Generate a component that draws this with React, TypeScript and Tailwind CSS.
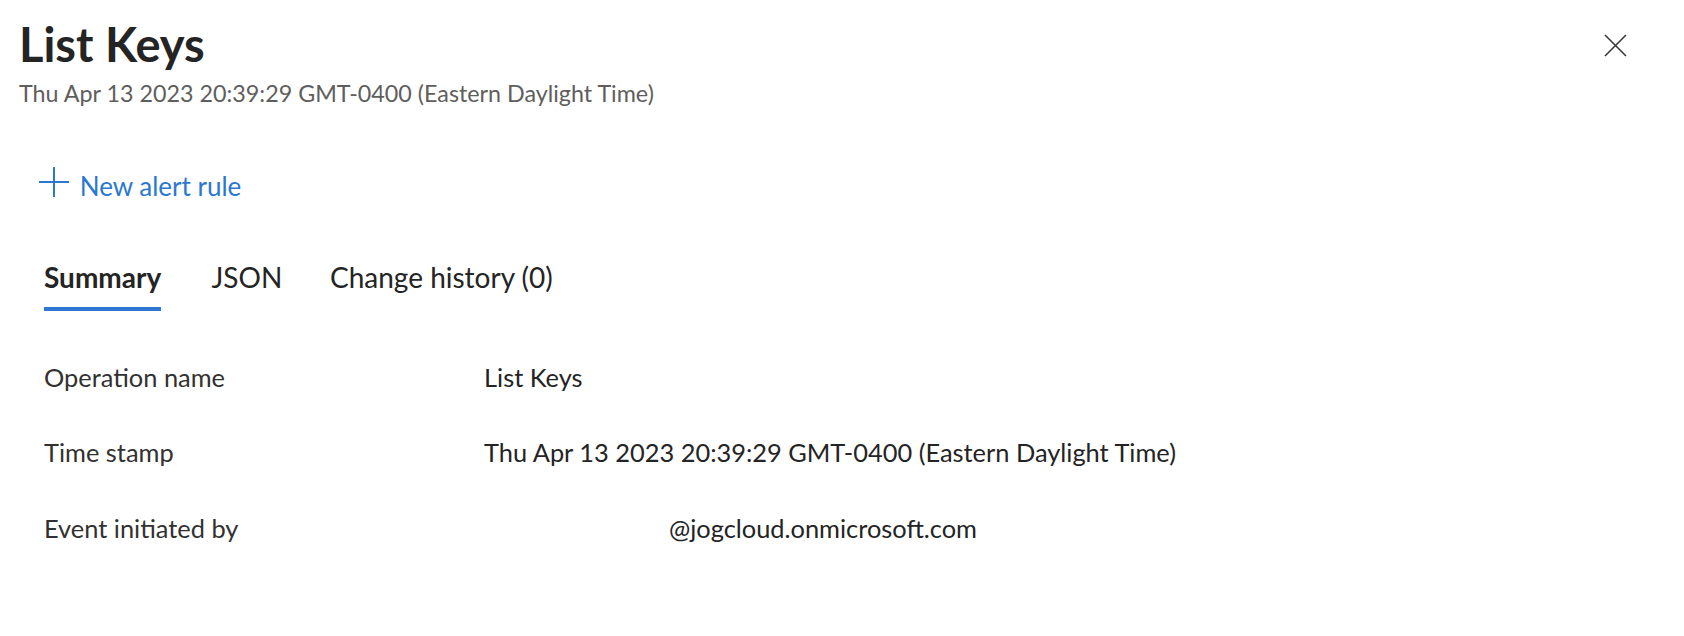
import React, { useState } from "react";

const rows: { label: string; value: string; indent?: boolean }[] = [
  { label: "Operation name", value: "List Keys" },
  { label: "Time stamp", value: "Thu Apr 13 2023 20:39:29 GMT-0400 (Eastern Daylight Time)" },
  { label: "Event initiated by", value: "@jogcloud.onmicrosoft.com", indent: true },
];

const tabs = [
  { name: "Summary", width: "w-[167.5px]" },
  { name: "JSON", width: "w-[118.5px]" },
  { name: "Change history (0)", width: "w-auto" },
];

const App: React.FC = () => {
  const [active, setActive] = useState("Summary");

  return (
    <div className="min-h-[636px] w-full bg-white font-[Lato,sans-serif] text-[#323130]">
      {/* Header */}
      <div className="flex justify-between pl-[19px] pr-[57px] pt-[18px]">
        <div>
          <h1 className="text-[47px] leading-[52px] font-bold text-[#242424]">List Keys</h1>
          <p className="mt-[8.5px] text-[23.3px] leading-[28px] text-[#605e5c]">
            Thu Apr 13 2023 20:39:29 GMT-0400 (Eastern Daylight Time)
          </p>
        </div>
        <button className="mt-[16px] h-[23px] w-[23px]" aria-label="Close">
          <svg viewBox="0 0 23 23" className="h-[23px] w-[23px]" fill="none" stroke="#3b3a39" strokeWidth="1.6">
            <path d="M1 1 L22 22 M22 1 L1 22" />
          </svg>
        </button>
      </div>

      {/* Command */}
      <div className="mt-[63px] flex items-start pl-[39px]">
        <svg viewBox="0 0 30 30" className="mt-[-2.2px] h-[30px] w-[30px]" fill="none" stroke="#2b78d0" strokeWidth="2">
          <path d="M15 0 V30 M0 15 H30" />
        </svg>
        <span className="ml-[10.7px] text-[26px] leading-[32px] text-[#2b78d0]">New alert rule</span>
      </div>

      {/* Tabs */}
      <div className="mt-[58px] flex pl-[44px]">
        {tabs.map((t) => (
          <div key={t.name} className={t.width}>
            <button
              onClick={() => setActive(t.name)}
              className={`inline-flex flex-col text-[28px] leading-[34px] text-[#242424] ${
                active === t.name ? "font-bold" : "font-normal"
              }`}
            >
              {t.name}
              <span className={`mt-[13px] h-[4px] w-full ${active === t.name ? "bg-[#2f78d2]" : "bg-transparent"}`} />
            </button>
          </div>
        ))}
      </div>

      {/* Summary rows */}
      <div className="mt-[50px] flex flex-col gap-[43.5px] pl-[44px]">
        {rows.map((r) => (
          <div key={r.label} className="grid grid-cols-[440px_1fr] text-[25.4px] leading-[32px]">
            <span className="text-[#323130]">{r.label}</span>
            <span className={`text-[#242424] ${r.indent ? "pl-[185px]" : ""}`}>{r.value}</span>
          </div>
        ))}
      </div>
    </div>
  );
};

export default App;
